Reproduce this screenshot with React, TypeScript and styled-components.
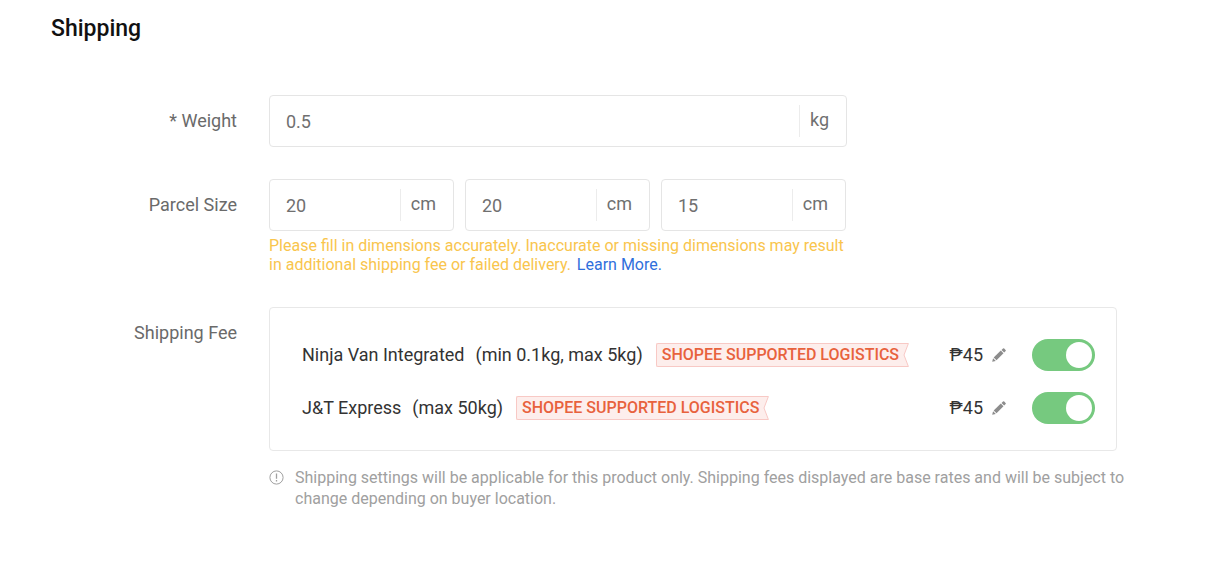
import React, { useState } from "react";
import styled, { createGlobalStyle } from "styled-components";

const GlobalStyle = createGlobalStyle`
  *, *::before, *::after { box-sizing: border-box; }
  body { margin: 0; background: #fff; font-family: Roboto, "Liberation Sans", sans-serif; color: #333; }
`;

const Page = styled.main`
  padding: 13px 113px 32px 51px;
`;

const Title = styled.h1`
  margin: 0 0 50px;
  font-size: 23px;
  line-height: 32px;
  font-weight: 500;
  color: #111;
`;

const FormRow = styled.div<{ $gap?: number }>`
  display: grid;
  grid-template-columns: 186px minmax(0, 1fr);
  column-gap: 32px;
  margin-bottom: ${(p) => p.$gap ?? 32}px;
`;

const Label = styled.label`
  justify-self: end;
  font-size: 18px;
  line-height: 52px;
  height: 52px;
  color: #6a6a6a;
`;

const Narrow = styled.div`
  max-width: 578px;
`;

const Dimensions = styled.div`
  display: grid;
  grid-template-columns: repeat(3, minmax(0, 1fr));
  gap: 11px;
  max-width: 577px;
`;

const Field = styled.div`
  display: flex;
  align-items: center;
  height: 52px;
  border: 1px solid #e5e5e5;
  border-radius: 4px;
  background: #fff;
`;

const Input = styled.input`
  flex: 1;
  min-width: 0;
  height: 100%;
  padding: 0 16px;
  border: 0;
  outline: 0;
  background: transparent;
  font: 400 18px Roboto, "Liberation Sans", sans-serif;
  color: #707070;
`;

const Unit = styled.span`
  height: 32px;
  padding: 0 17px 0 10px;
  border-left: 1px solid #ececec;
  font-size: 18px;
  line-height: 30px;
  color: #707070;
`;

const Hint = styled.p`
  margin: 5px 0 0;
  font-size: 16px;
  line-height: 19px;
  color: #f9c54d;
`;

const Link = styled.a`
  margin-left: 2px;
  color: #2f6fdc;
  text-decoration: none;
`;

const Card = styled.div`
  display: grid;
  gap: 21px;
  padding: 31px 21px 26px 32px;
  border: 1px solid #e8e8e8;
  border-radius: 4px;
`;

const Carrier = styled.div`
  display: flex;
  align-items: center;
  height: 32px;
  font-size: 18px;
  line-height: 32px;
`;

const Limit = styled.span`
  margin: 0 13px 0 11px;
`;

const TagBox = styled.span`
  display: flex;
  height: 24px;
`;

const TagText = styled.span`
  padding: 0 3px 0 5px;
  border: 1px solid #f8c9c5;
  border-right: 0;
  border-radius: 2px 0 0 2px;
  background: #fdeeec;
  font-size: 16px;
  font-weight: 500;
  line-height: 22px;
  color: #e8623d;
`;

const Price = styled.span`
  margin-left: auto;
`;

const EditButton = styled.button`
  display: flex;
  margin: 0 25px 0 8px;
  padding: 0;
  border: 0;
  background: none;
  cursor: pointer;
`;

const Switch = styled.input`
  appearance: none;
  display: flex;
  align-items: center;
  width: 63px;
  height: 32px;
  margin: 0;
  padding: 0 3px;
  border-radius: 16px;
  background: #d8d8d8;
  cursor: pointer;

  &::before {
    content: "";
    width: 26px;
    height: 26px;
    border-radius: 50%;
    background: #fff;
  }
  &:checked {
    justify-content: flex-end;
    background: #76c97f;
  }
`;

const Note = styled.div`
  display: flex;
  gap: 11px;
  margin: 16px -16px 0 0;
  font-size: 16px;
  line-height: 21px;
  color: #a0a0a0;

  svg { flex: none; margin-top: 3px; }
  p { margin: 0; }
`;

function Tag({ children }: { children: React.ReactNode }) {
  return (
    <TagBox>
      <TagText>{children}</TagText>
      <svg width="7" height="24" viewBox="0 0 7 24" aria-hidden="true">
        <path d="M0 .5H6.4L2 12L6.4 23.5H0" fill="#fdeeec" stroke="#f8c9c5" />
      </svg>
    </TagBox>
  );
}

function Pencil() {
  return (
    <svg width="16" height="16" viewBox="0 0 16 16" fill="#8c8c8c" aria-hidden="true">
      <path d="M1.2 14.8L2.1 11.2L4.8 13.9Z" />
      <path d="M2.7 10.5L9.8 3.6L12.5 6.3L5.5 13.3Z" />
      <path d="M10.5 2.9L12 1.5Q12.6 1 13.2 1.5L14.6 2.9Q15.1 3.5 14.6 4.1L13.2 5.6Z" />
    </svg>
  );
}

interface CarrierRowProps {
  name: string;
  limit: string;
  fee: number;
}

function CarrierRow({ name, limit, fee }: CarrierRowProps) {
  const [on, setOn] = useState(true);
  return (
    <Carrier>
      <span>{name}</span>
      <Limit>({limit})</Limit>
      <Tag>SHOPEE SUPPORTED LOGISTICS</Tag>
      <Price>₱{fee}</Price>
      <EditButton type="button" aria-label={`Edit ${name} fee`}>
        <Pencil />
      </EditButton>
      <Switch type="checkbox" role="switch" aria-label={name} checked={on} onChange={() => setOn(!on)} />
    </Carrier>
  );
}

export default function App() {
  return (
    <>
      <GlobalStyle />
      <Page>
        <Title>Shipping</Title>
        <FormRow>
          <Label htmlFor="weight">* Weight</Label>
          <Narrow>
            <Field>
              <Input id="weight" defaultValue="0.5" />
              <Unit>kg</Unit>
            </Field>
          </Narrow>
        </FormRow>
        <FormRow $gap={33}>
          <Label htmlFor="size-width">Parcel Size</Label>
          <Narrow>
            <Dimensions>
              <Field>
                <Input id="size-width" defaultValue="20" />
                <Unit>cm</Unit>
              </Field>
              <Field>
                <Input aria-label="Parcel length" defaultValue="20" />
                <Unit>cm</Unit>
              </Field>
              <Field>
                <Input aria-label="Parcel height" defaultValue="15" />
                <Unit>cm</Unit>
              </Field>
            </Dimensions>
            <Hint>
              Please fill in dimensions accurately. Inaccurate or missing dimensions may result in
              additional shipping fee or failed delivery. <Link href="#learn-more">Learn More.</Link>
            </Hint>
          </Narrow>
        </FormRow>
        <FormRow $gap={0}>
          <Label as="span">Shipping Fee</Label>
          <div>
            <Card>
              <CarrierRow name="Ninja Van Integrated" limit="min 0.1kg, max 5kg" fee={45} />
              <CarrierRow name="J&T Express" limit="max 50kg" fee={45} />
            </Card>
            <Note>
              <svg width="15" height="15" viewBox="0 0 15 15" fill="none" stroke="#a0a0a0" aria-hidden="true">
                <circle cx="7.5" cy="7.5" r="6.6" />
                <path d="M7.5 3.6V8.8M7.5 10V11.4" strokeWidth="1.3" />
              </svg>
              <p>
                Shipping settings will be applicable for this product only. Shipping fees displayed
                are base rates and will be subject to change depending on buyer location.
              </p>
            </Note>
          </div>
        </FormRow>
      </Page>
    </>
  );
}
